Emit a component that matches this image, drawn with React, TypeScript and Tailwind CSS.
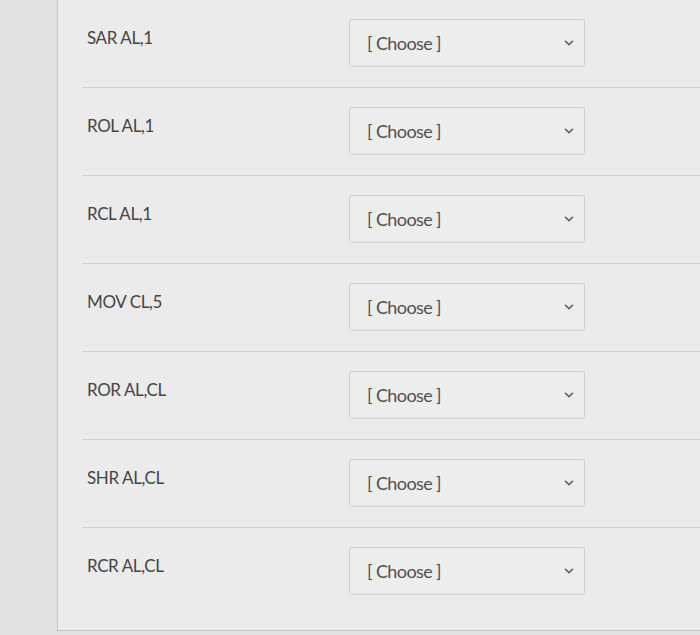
import { ChevronDown } from "lucide-react";

const rows = [
  "SAR AL,1",
  "ROL AL,1",
  "RCL AL,1",
  "MOV CL,5",
  "ROR AL,CL",
  "SHR AL,CL",
  "RCR AL,CL",
];

function ChooseSelect() {
  return (
    <div className="flex h-[48px] w-[236px] items-center justify-between rounded-[3px] border border-[#cfcfcf] bg-[#ededed] pl-[17px] pr-[8px]">
      <span className="text-[18px] tracking-[-0.6px] text-[#505050]">[ Choose ]</span>
      <ChevronDown className="size-[14px] text-[#555555]" strokeWidth={2.5} />
    </div>
  );
}

export default function App() {
  return (
    <div
      className="h-[635px] w-[700px] overflow-hidden bg-[#e2e2e2] pl-[57px]"
      style={{ fontFamily: "Lato, 'Open Sans', sans-serif" }}
    >
      <div className="h-[631px] border-b border-l border-[#c4c4c4] bg-[#ebebeb]">
        {rows.map((label, i) => (
          <div
            key={label}
            className={
              i < rows.length - 1
                ? "ml-[24px] flex border-b border-[#d2d2d2] pb-[20px] pt-[19px]"
                : "ml-[24px] flex pt-[19px]"
            }
          >
            <div className="w-[267px] pl-[5px] pt-[8px] text-[17px] leading-[22px] tracking-[-0.4px] text-[#454545]">
              {label}
            </div>
            <ChooseSelect />
          </div>
        ))}
      </div>
    </div>
  );
}
